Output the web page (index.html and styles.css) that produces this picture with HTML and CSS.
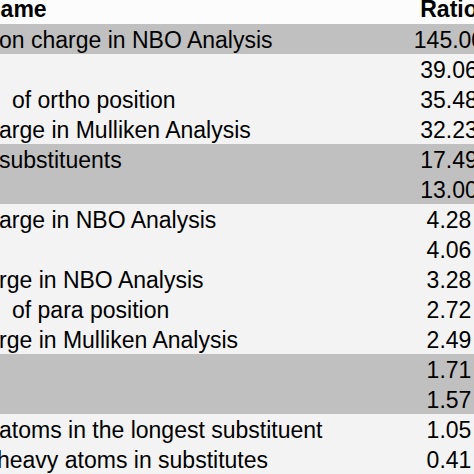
FILE: index.html
```html
<!DOCTYPE html>
<html>
<head>
<meta charset="utf-8">
<link rel="stylesheet" href="styles.css">
</head>
<body>
<table class="tbl">
  <colgroup><col class="c-name"><col class="c-ratio"></colgroup>
  <thead>
    <tr class="head"><th class="name"><span class="cutN">Name</span></th><th class="ratio">Ratio</th></tr>
  </thead>
  <tbody>
    <tr class="dark"><td class="name"><span class="cut1">on charge in NBO Analysis</span></td><td class="ratio">145.00</td></tr>
    <tr class="light"><td class="name"></td><td class="ratio">39.06</td></tr>
    <tr class="light"><td class="name"><span class="ind">of ortho position</span></td><td class="ratio">35.48</td></tr>
    <tr class="light"><td class="name"><span class="cut1">arge in Mulliken Analysis</span></td><td class="ratio">32.23</td></tr>
    <tr class="dark"><td class="name"><span class="cut1">substituents</span></td><td class="ratio">17.49</td></tr>
    <tr class="dark"><td class="name"></td><td class="ratio">13.00</td></tr>
    <tr class="light"><td class="name"><span class="cut1">arge in NBO Analysis</span></td><td class="ratio">4.28</td></tr>
    <tr class="light"><td class="name"></td><td class="ratio">4.06</td></tr>
    <tr class="light"><td class="name"><span class="cut1">rge in NBO Analysis</span></td><td class="ratio">3.28</td></tr>
    <tr class="light"><td class="name"><span class="ind">of para position</span></td><td class="ratio">2.72</td></tr>
    <tr class="light"><td class="name"><span class="cut1">rge in Mulliken Analysis</span></td><td class="ratio">2.49</td></tr>
    <tr class="dark"><td class="name"></td><td class="ratio">1.71</td></tr>
    <tr class="dark"><td class="name"></td><td class="ratio">1.57</td></tr>
    <tr class="light"><td class="name"><span class="cut1">atoms in the longest substituent</span></td><td class="ratio">1.05</td></tr>
    <tr class="light"><td class="name"><span class="cutH">heavy atoms in substitutes</span></td><td class="ratio">0.41</td></tr>
  </tbody>
</table>
</body>
</html>
```
FILE: styles.css
```css
html, body {
  margin: 0;
  padding: 0;
  background: #f3f3f3;
  overflow: hidden;
  width: 474px;
  height: 474px;
}
.tbl {
  border-collapse: collapse;
  table-layout: fixed;
  width: 494px;
  margin-top: -7px;
  font-family: "Liberation Sans", Arial, sans-serif;
  font-size: 23px;
  color: #000;
}
.c-name { width: 404px; }
.c-ratio { width: 90px; }
.tbl th, .tbl td {
  padding: 3px 0 0 0;
  line-height: 27px;
  height: 27px;
  white-space: nowrap;
  overflow: hidden;
}
.tbl th {
  font-weight: bold;
  padding: 2px 0 1px 0;
  line-height: 28px;
  height: 28px;
}
.head { background: #fcfcfc; }
.dark { background: #c0c0c0; }
.light { background: #f3f3f3; }
.name { text-align: left; }
.ratio { text-align: center; }
.cutN { display: inline-block; margin-left: -16px; }
.cut1 { display: inline-block; margin-left: -1px; }
.cutH { display: inline-block; margin-left: -3px; }
.ind { display: inline-block; margin-left: 12px; }
```
